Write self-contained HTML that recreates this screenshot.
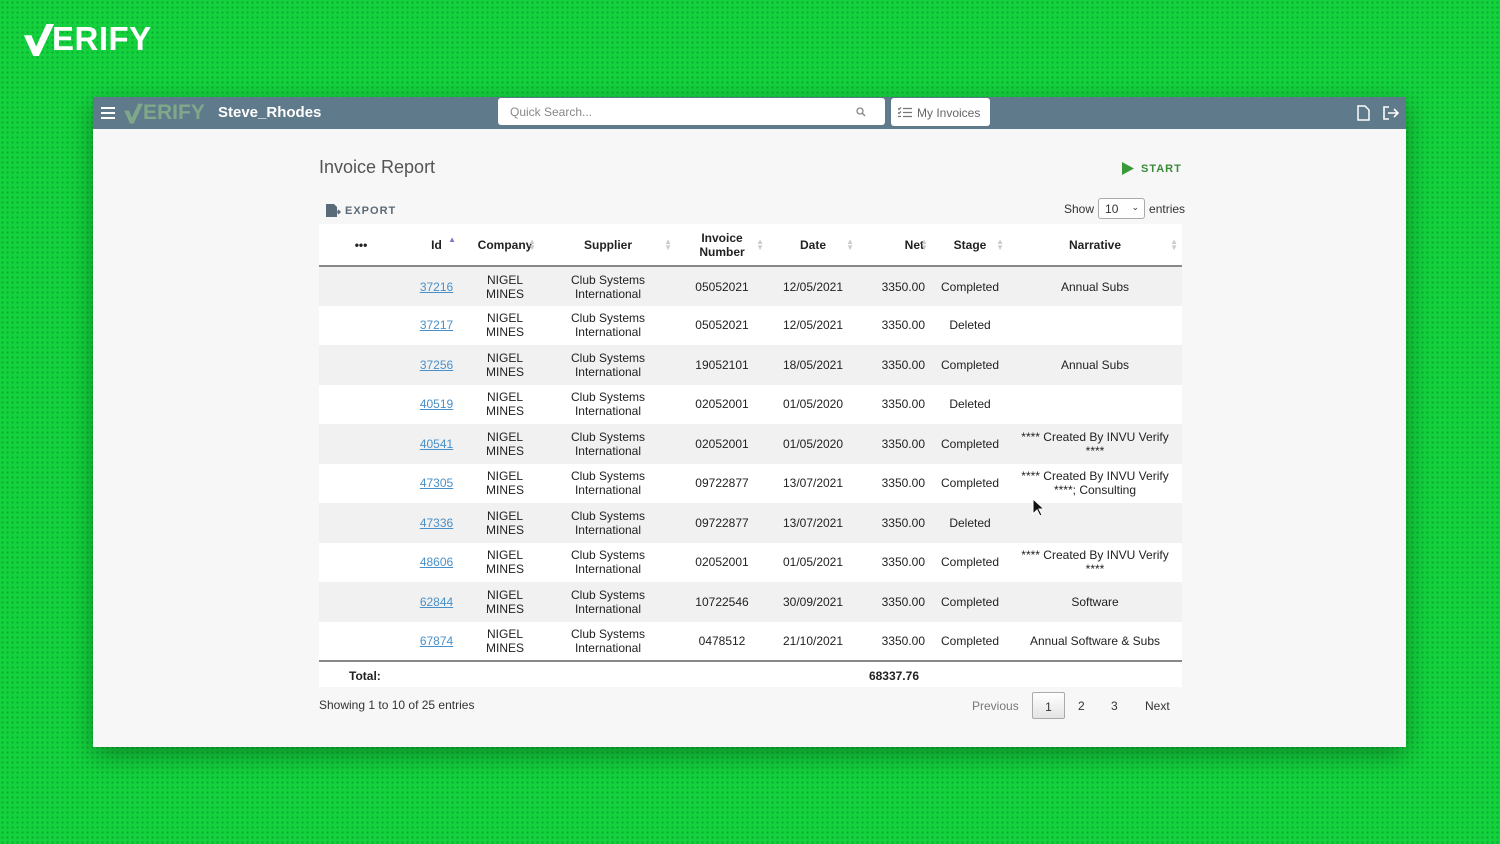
<!DOCTYPE html>
<html><head><meta charset="utf-8"><style>
*{box-sizing:border-box;margin:0;padding:0}
body{width:1500px;height:844px;overflow:hidden;font-family:"Liberation Sans",sans-serif;background:#14d23e;background-image:radial-gradient(#0cab31 1px,transparent 1.3px);background-size:5px 5px;position:relative}
.logo{position:absolute;left:22px;top:20px;color:#fff;font-weight:bold;font-size:33px;letter-spacing:0.5px;display:flex;align-items:center}
.panel{position:absolute;left:93px;top:97px;width:1313px;height:650px;background:#f7f7f7;box-shadow:0 8px 24px rgba(0,0,0,.35)}
.bar{position:absolute;left:0;top:0;width:100%;height:32px;background:#5f7a8a}
.abs{position:absolute}
table{border-collapse:collapse;position:absolute;left:226px;top:127px;width:863px;font-size:12px;color:#222}
th{height:42px;font-weight:bold;text-align:center;border-bottom:2px solid #888;background:#fff;position:relative}
td{height:39.5px;text-align:center;line-height:14px}
tbody tr:nth-child(odd){background:#f1f1f1}
tbody tr:nth-child(even){background:#fff}
tbody tr:first-child td{padding-top:2px}
a{color:#4a90c8;text-decoration:underline}
.s{position:absolute;right:4px;top:15px;font-size:8px;color:#ccc;line-height:6px}
tfoot td{height:26px;border-top:2px solid #888;background:#fff;font-weight:bold;padding-top:3px}
</style></head><body>
<div class="logo"><svg width="32" height="34" viewBox="0 0 34 36"><path d="M2 14 L10 14 L15 26 L26 2 L34 2 L18 36 L12 36 Z" fill="#fff"/></svg><span style="margin-left:-2px">ERIFY</span></div>
<div class="panel">
<div class="bar">
<div class="abs" style="left:8px;top:10px;width:14px;height:2px;background:#fff;box-shadow:0 5px 0 #fff,0 10px 0 #fff"></div>
<div class="abs" style="left:30px;top:4px;color:#7fa88a;font-weight:bold;font-size:21px;display:flex;align-items:center"><svg width="20" height="22" viewBox="0 0 34 36"><path d="M2 14 L10 14 L15 26 L26 2 L34 2 L18 36 L12 36 Z" fill="#7fa88a"/></svg>ERIFY</div>
<div class="abs" style="left:125px;top:7px;color:#fff;font-weight:bold;font-size:15px">Steve_Rhodes</div>
<div class="abs" style="left:405px;top:1px;width:387px;height:27px;background:#fff;border-radius:3px;font-size:12px;color:#888;padding:7px 12px">Quick Search...<svg style="position:absolute;right:19px;top:9px" width="10" height="10"><circle cx="4" cy="4" r="3" fill="none" stroke="#888" stroke-width="1.3"/><path d="M6.3 6.3L9 9" stroke="#888" stroke-width="1.4"/></svg></div>
<div class="abs" style="left:798px;top:1px;width:99px;height:28px;background:#fff;border-radius:3px;font-size:12px;color:#666;padding:8px 0 0 26px">My Invoices<svg style="position:absolute;left:7px;top:9px" width="14" height="11"><path d="M5 1.5h9M5 5.5h9M5 9.5h9M0 1.5l1 1 2-2M0 5.5l1 1 2-2M0 9.5h3" stroke="#777" stroke-width="1.3" fill="none"/></svg></div>
<svg class="abs" style="left:1263px;top:8px" width="14" height="16"><path d="M2 1h7l4 4v10H2z" fill="none" stroke="#fff" stroke-width="1.5"/></svg>
<svg class="abs" style="left:1289px;top:8px" width="18" height="16"><path d="M7 2H2v12h5M6 8h10M12 4l4 4-4 4" fill="none" stroke="#fff" stroke-width="1.6"/></svg>
</div>
<div class="abs" style="left:226px;top:60px;font-size:18px;color:#555">Invoice Report</div>
<div class="abs" style="left:1028px;top:64px;font-size:11px;color:#3a8a3a;font-weight:bold;letter-spacing:1px;display:flex;align-items:center"><svg width="14" height="15"><path d="M1 1L13 7.5 1 14z" fill="#3a9a3a"/></svg><span style="margin-left:6px">START</span></div>
<div class="abs" style="left:232px;top:106px;font-size:11px;color:#5a6a78;font-weight:bold;letter-spacing:1px;display:flex;align-items:center"><svg width="16" height="15"><path d="M1 1h8l3 3v10H1z" fill="#5a6a78"/><path d="M10 9h5M13 7l2 2-2 2" stroke="#5a6a78" stroke-width="1.5" fill="none"/></svg><span style="margin-left:4px">EXPORT</span></div>
<div class="abs" style="left:971px;top:101px;font-size:12px;color:#333;display:flex;align-items:center">Show <span style="display:inline-block;width:47px;height:21px;border:1px solid #aaa;border-radius:3px;background:#fff;margin:0 4px;padding:3px 6px;position:relative">10<span style="position:absolute;right:5px;top:3px;font-size:9px">&#8964;</span></span>entries</div>
<table>
<colgroup><col style="width:84px"><col style="width:67px"><col style="width:70px"><col style="width:136px"><col style="width:92px"><col style="width:90px"><col style="width:74px"><col style="width:76px"><col style="width:174px"></colgroup>
<thead><tr><th>•••</th><th>Id<span class="s" style="color:#7a7ac8;right:14px;top:13px">▲</span></th><th>Company<span class="s">▲<br>▼</span></th><th>Supplier<span class="s">▲<br>▼</span></th><th>Invoice<br>Number<span class="s">▲<br>▼</span></th><th>Date<span class="s">▲<br>▼</span></th><th style="text-align:right;padding-right:8px">Net<span class="s">▲<br>▼</span></th><th>Stage<span class="s">▲<br>▼</span></th><th>Narrative<span class="s">▲<br>▼</span></th></tr></thead>
<tbody>
<tr><td></td><td><a>37216</a></td><td>NIGEL<br>MINES</td><td>Club Systems<br>International</td><td>05052021</td><td>12/05/2021</td><td style="text-align:right;padding-right:7px">3350.00</td><td>Completed</td><td>Annual Subs</td></tr>
<tr><td></td><td><a>37217</a></td><td>NIGEL<br>MINES</td><td>Club Systems<br>International</td><td>05052021</td><td>12/05/2021</td><td style="text-align:right;padding-right:7px">3350.00</td><td>Deleted</td><td></td></tr>
<tr><td></td><td><a>37256</a></td><td>NIGEL<br>MINES</td><td>Club Systems<br>International</td><td>19052101</td><td>18/05/2021</td><td style="text-align:right;padding-right:7px">3350.00</td><td>Completed</td><td>Annual Subs</td></tr>
<tr><td></td><td><a>40519</a></td><td>NIGEL<br>MINES</td><td>Club Systems<br>International</td><td>02052001</td><td>01/05/2020</td><td style="text-align:right;padding-right:7px">3350.00</td><td>Deleted</td><td></td></tr>
<tr><td></td><td><a>40541</a></td><td>NIGEL<br>MINES</td><td>Club Systems<br>International</td><td>02052001</td><td>01/05/2020</td><td style="text-align:right;padding-right:7px">3350.00</td><td>Completed</td><td>**** Created By INVU Verify<br>****</td></tr>
<tr><td></td><td><a>47305</a></td><td>NIGEL<br>MINES</td><td>Club Systems<br>International</td><td>09722877</td><td>13/07/2021</td><td style="text-align:right;padding-right:7px">3350.00</td><td>Completed</td><td>**** Created By INVU Verify<br>****; Consulting</td></tr>
<tr><td></td><td><a>47336</a></td><td>NIGEL<br>MINES</td><td>Club Systems<br>International</td><td>09722877</td><td>13/07/2021</td><td style="text-align:right;padding-right:7px">3350.00</td><td>Deleted</td><td></td></tr>
<tr><td></td><td><a>48606</a></td><td>NIGEL<br>MINES</td><td>Club Systems<br>International</td><td>02052001</td><td>01/05/2021</td><td style="text-align:right;padding-right:7px">3350.00</td><td>Completed</td><td>**** Created By INVU Verify<br>****</td></tr>
<tr><td></td><td><a>62844</a></td><td>NIGEL<br>MINES</td><td>Club Systems<br>International</td><td>10722546</td><td>30/09/2021</td><td style="text-align:right;padding-right:7px">3350.00</td><td>Completed</td><td>Software</td></tr>
<tr><td></td><td><a>67874</a></td><td>NIGEL<br>MINES</td><td>Club Systems<br>International</td><td>0478512</td><td>21/10/2021</td><td style="text-align:right;padding-right:7px">3350.00</td><td>Completed</td><td>Annual Software &amp; Subs</td></tr>
</tbody>
<tfoot><tr><td style="text-align:left;padding-left:30px" colspan="2">Total:</td><td colspan="4"></td><td style="text-align:right;padding-right:13px">68337.76</td><td colspan="2"></td></tr></tfoot>
</table>
<div class="abs" style="left:226px;top:601px;font-size:12px;color:#333">Showing 1 to 10 of 25 entries</div>
<div class="abs" style="left:879px;top:602px;font-size:12px;color:#777">Previous</div>
<div class="abs" style="left:939px;top:595px;width:33px;height:27px;border:1px solid #aaa;border-radius:2px;background:linear-gradient(#fff,#e4e4e4);font-size:12px;color:#333;text-align:center;padding-top:7px">1</div>
<div class="abs" style="left:985px;top:602px;font-size:12px;color:#333">2</div>
<div class="abs" style="left:1018px;top:602px;font-size:12px;color:#333">3</div>
<div class="abs" style="left:1052px;top:602px;font-size:12px;color:#333">Next</div>
</div>
<svg class="abs" style="left:1032px;top:498px" width="14" height="20"><path d="M1 1v15l4-4 3 6 2-1-3-6h5z" fill="#111" stroke="#fff" stroke-width="1"/></svg>
</body></html>
